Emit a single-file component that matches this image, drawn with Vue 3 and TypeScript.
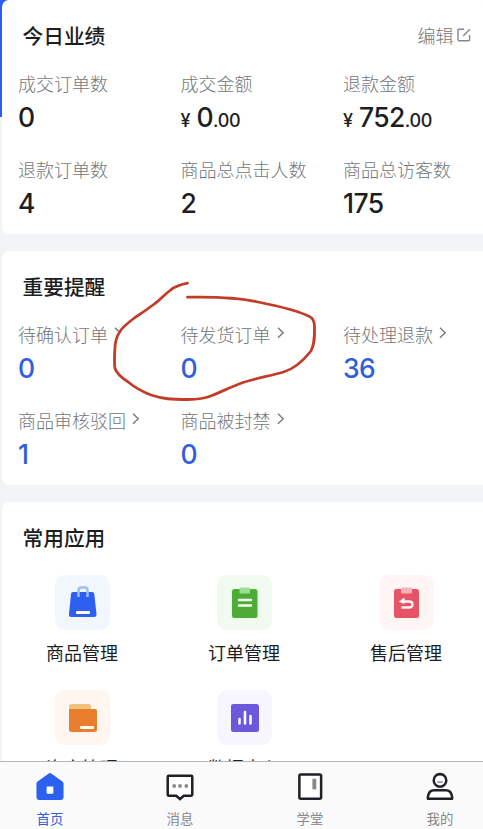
<script setup lang="ts">
interface Stat { label: string; value: string; prefix?: string; suffix?: string; chevron?: string }
interface AppItem { label: string; icon: string }

const fullChevron = 'M1 .8 6.2 5.800 1 10.800'

const stats: Stat[] = [
  { label: '成交订单数', value: '0' },
  { label: '成交金额', value: '0', prefix: '¥', suffix: '.00' },
  { label: '退款金额', value: '752', prefix: '¥', suffix: '.00' },
  { label: '退款订单数', value: '4' },
  { label: '商品总点击人数', value: '2' },
  { label: '商品总访客数', value: '175' },
]
const reminders: Stat[] = [
  { label: '待确认订单', value: '0', chevron: 'M1 .8 4.500 4.200' },
  { label: '待发货订单', value: '0' },
  { label: '待处理退款', value: '36' },
  { label: '商品审核驳回', value: '1' },
  { label: '商品被封禁', value: '0' },
]
const apps: AppItem[] = [
  { label: '商品管理', icon: 'goods' },
  { label: '订单管理', icon: 'orders' },
  { label: '售后管理', icon: 'aftersale' },
  { label: '资产管理', icon: 'assets' },
  { label: '数据中心', icon: 'data' },
]
const tabs: AppItem[] = [
  { label: '首页', icon: 'home' },
  { label: '消息', icon: 'message' },
  { label: '学堂', icon: 'school' },
  { label: '我的', icon: 'mine' },
]
</script>

<template>
  <div class="page">
    <main class="content">
      <section class="card">
        <header class="head">
          <h2>今日业绩</h2>
          <span class="edit">编辑
            <svg width="14" height="14" viewBox="0 0 14 14" fill="none" stroke="#85888c" stroke-width="1.4">
              <path d="M7 1.2H2.2Q1 1.2 1 2.4V11.6Q1 12.8 2.2 12.8H11.4Q12.6 12.8 12.6 11.6V7M6.2 8 12.8 1.2" />
            </svg>
          </span>
        </header>
        <div class="grid">
          <div v-for="s in stats" :key="s.label" class="stat">
            <div class="label">{{ s.label }}</div>
            <div class="value">
              <span v-if="s.prefix" class="yen">{{ s.prefix }}</span><span>{{ s.value }}</span><span v-if="s.suffix" class="cents">{{ s.suffix }}</span>
            </div>
          </div>
        </div>
      </section>

      <section class="card">
        <header class="head"><h2>重要提醒</h2></header>
        <div class="grid">
          <div v-for="r in reminders" :key="r.label" class="stat">
            <div class="label">
              {{ r.label }}
              <svg class="chev" width="8" height="12" viewBox="0 0 8 12" fill="none" stroke="#777a7e" stroke-width="1.4">
                <path :d="r.chevron ?? fullChevron" />
              </svg>
            </div>
            <div class="value blue">{{ r.value }}</div>
          </div>
        </div>
        <svg class="mark" width="206" height="124" viewBox="0 0 206 124" fill="none" stroke="#c23d28" stroke-width="2.8" stroke-linecap="round" stroke-linejoin="round">
          <path d="M74.500 3.200C68 4.500 62 6 57 10.500C51 15 47 20 42 23.500C36 28 29 33 22 37.500C14 43.500 9 47.500 7 51.500C3 57 2 62 1.800 70C1.500 77 1 84 2 88.500C4 94 9 98 14.500 101.500C20 106 30 112 38 115C50 119 58 119.500 75 119.500C84 119.500 92 118.500 99 115.500C109 111.500 120 106 130 102.500C146 97.500 157 96 170.500 92C181 89 190 81 198 71C202 63 201.500 56 201.500 47C201.500 41 200 38 196.500 36.500C186 31 165 26 145 22C130 18.500 108 16.500 74.500 17.200" />
        </svg>
      </section>

      <section class="card apps-card">
        <header class="head"><h2>常用应用</h2></header>
        <div class="apps">
          <div v-for="a in apps" :key="a.label" class="app">
            <div class="tile" :class="a.icon">
              <svg v-if="a.icon === 'goods'" width="55" height="55" viewBox="0 0 55 55">
                <path d="M18 17H37Q39 17 39.300 19L41.500 39Q41.600 42 39 42H16Q13.700 42 14 39L16 19Q16.200 17 18 17Z" fill="#2c60ee" />
                <path d="M23.500 22V15.500Q23.500 12.500 26 12.500H30Q32.500 12.500 32.500 15.500V22" fill="none" stroke="#9dbef5" stroke-width="2.500" />
                <rect x="21" y="36" width="14" height="3" rx="1" fill="#fff" />
              </svg>
              <svg v-else-if="a.icon === 'orders'" width="55" height="55" viewBox="0 0 55 55">
                <rect x="15" y="14" width="25.500" height="29" rx="2.500" fill="#4dac35" />
                <rect x="22.500" y="12.500" width="10.500" height="6" rx="1" fill="#a1dc96" />
                <path d="M22 25H34M22 30.500H34" stroke="#f6fff3" stroke-width="2.500" stroke-linecap="round" />
              </svg>
              <svg v-else-if="a.icon === 'aftersale'" width="55" height="55" viewBox="0 0 55 55">
                <rect x="15" y="14" width="25" height="29" rx="2.500" fill="#e75468" />
                <rect x="22" y="12.500" width="11" height="6" rx="1" fill="#f4b3b9" />
                <path d="M25.500 23.500 22 26.500 25.500 28M22.500 26.500H30Q33.500 26.500 33.500 29.500T30 32.500H22.500" fill="none" stroke="#fff5f5" stroke-width="2.300" />
              </svg>
              <svg v-else-if="a.icon === 'assets'" width="55" height="55" viewBox="0 0 55 55">
                <path d="M16 14H34Q36 14 36 16V25H14V16Q14 14 16 14Z" fill="#f1c27d" />
                <path d="M14 19H40Q42 19 42 21V39.500Q42 42 39.500 42H16.500Q14 42 14 39.500Z" fill="#ea7e2f" />
                <rect x="25" y="36" width="14" height="3" rx="1" fill="#fffaf2" />
              </svg>
              <svg v-else width="55" height="55" viewBox="0 0 55 55">
                <rect x="14" y="14" width="28" height="28" rx="2.500" fill="#6c58dd" />
                <path d="M22.500 29V33.500M28 22V33.500M33.500 26V33.500" stroke="#fff" stroke-width="2.500" stroke-linecap="round" />
              </svg>
            </div>
            <span>{{ a.label }}</span>
          </div>
        </div>
      </section>
    </main>

    <nav class="tabbar">
      <div v-for="(t, i) in tabs" :key="t.label" class="tab" :class="{ active: i === 0 }">
        <svg v-if="t.icon === 'home'" width="30" height="30" viewBox="0 0 30 30">
          <path d="M13.700 1.500Q15 .6 16.300 1.500L27.500 9.500Q29 10.500 29 12V26.500Q29 29 26.500 29H3.500Q1 29 1 26.500V12Q1 10.500 2.500 9.500Z" fill="#2c60ee" />
          <rect x="11.500" y="15" width="7" height="7.500" rx="1" fill="#fff" />
        </svg>
        <svg v-else-if="t.icon === 'message'" width="30" height="30" viewBox="0 0 30 30">
          <path d="M3.500 4H26.500Q27.700 4 27.700 5.200V23.300Q27.700 24.500 26.500 24.500H19L15 28 11 24.500H3.500Q2.300 24.500 2.300 23.300V5.200Q2.300 4 3.500 4Z" fill="#fff" stroke="#202126" stroke-width="2.600" />
          <g fill="#8a8c90"><circle cx="9" cy="14.500" r="2" /><circle cx="15" cy="14.500" r="2" /><circle cx="21.500" cy="14.500" r="2" /></g>
        </svg>
        <svg v-else-if="t.icon === 'school'" width="30" height="30" viewBox="0 0 30 30">
          <rect x="4" y="2.500" width="22.500" height="25.200" rx="1.500" fill="#fff" stroke="#202126" stroke-width="2.600" />
          <rect x="17.500" y="7" width="4" height="11" fill="#85898e" />
        </svg>
        <svg v-else width="30" height="30" viewBox="0 0 30 30">
          <circle cx="15" cy="8.700" r="6.500" fill="#fff" stroke="#202126" stroke-width="2.600" />
          <path d="M12 10H18Q15 12.300 12 10Z" fill="#85898e" stroke="#85898e" stroke-width=".7" />
          <path d="M2.500 27.700V25.500Q3.500 19 9 19H21Q26.500 19 27.500 25.500V27.700Z" fill="#fff" stroke="#202126" stroke-width="2.600" stroke-linejoin="round" />
        </svg>
        <span>{{ t.label }}</span>
      </div>
    </nav>
  </div>
</template>

<style>
body { overflow: hidden; }
</style>

<style scoped>
.page {
  width: 483px;
  height: 829px;
  display: flex;
  flex-direction: column;
  overflow: hidden;
  background: linear-gradient(#2c60ee, #2c60ee) 0 0 / 8px 117px no-repeat #f3f4f6;
  font-family: Inter, "Noto Sans CJK SC", sans-serif;
  color: #1c1e22;
}
.content {
  height: 761px;
  flex: none;
  overflow: hidden;
  display: flex;
  flex-direction: column;
  gap: 17px;
}
.card {
  position: relative;
  box-sizing: border-box;
  flex: none;
  width: 486px;
  height: 234px;
  margin-left: 2px;
  padding-top: 20px;
  border-radius: 7px;
  background: #fff;
}
.apps-card { height: 300px; }
.head {
  display: flex;
  justify-content: space-between;
  align-items: center;
  height: 30px;
  padding: 0 17px 0 20.5px;
}
h2 {
  margin: 0;
  padding-top: 3px;
  font-size: 20.7px;
  line-height: 30px;
  font-weight: 500;
}
.edit {
  display: flex;
  align-items: center;
  gap: 3.500px;
  font-size: 18px;
  font-weight: 300;
  color: #75787c;
}
.grid {
  display: grid;
  grid-template-columns: repeat(3, 162.500px);
  row-gap: 23px;
  padding: 21px 0 0 16px;
}
.label {
  display: flex;
  align-items: center;
  gap: 6px;
  height: 24px;
  font-size: 18px;
  font-weight: 300;
  color: #73767a;
  white-space: nowrap;
}
.chev { margin-top: -2px; }
.value {
  margin-top: 5px;
  height: 34px;
  line-height: 34px;
  font-size: 26.500px;
  font-weight: 500;
  letter-spacing: -.6px;
}
.blue { color: #2f5fda; font-weight: 450; }
.yen { font-size: 18px; margin-right: 6px; letter-spacing: 0; }
.cents { font-size: 18px; letter-spacing: -.3px; }
.mark {
  position: absolute;
  left: 111px;
  top: 29px;
}
.apps {
  display: grid;
  grid-template-columns: repeat(3, 162px);
  row-gap: 23px;
  margin-left: -1px;
  padding-top: 23px;
}
.app {
  display: flex;
  flex-direction: column;
  align-items: center;
  gap: 10.500px;
  height: 92px;
  font-size: 18px;
  line-height: 26px;
}
.tile { width: 55px; height: 55px; border-radius: 10px; }
.tile svg { display: block; }
.goods { background: #f2f7fe; }
.orders { background: #f1faf1; }
.aftersale { background: #fff5f5; }
.assets { background: #fff7ef; }
.data { background: #f7f6ff; }
.tabbar {
  position: relative;
  box-sizing: border-box;
  height: 68px;
  display: flex;
  justify-content: space-between;
  padding: 10px 13px 0 20px;
  border-top: 1px solid #b5b6b8;
  background: #fafafa;
}
.tab {
  width: 60px;
  display: flex;
  flex-direction: column;
  align-items: center;
  gap: 8px;
  font-size: 13.400px;
  line-height: 20px;
  color: #85888c;
}
.tab.active { color: #2f5fda; }
</style>
